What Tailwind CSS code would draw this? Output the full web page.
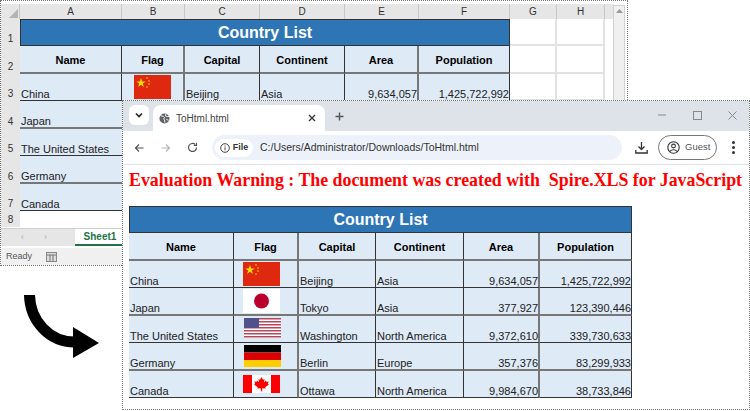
<!DOCTYPE html>
<html lang="en">
  <head>
    <meta charset="UTF-8" />
    <title>ToHtml</title>
    <script src="https://cdn.jsdelivr.net/npm/@tailwindcss/browser@4"></script>
  </head>

  <body class="relative w-[750px] h-[411px] overflow-hidden bg-white font-['Liberation_Sans',sans-serif] text-[11px] text-[#222]">
    <!-- flag symbols -->
    <svg class="hidden">
      <symbol id="flag-cn" viewBox="0 0 37 24">
        <rect width="37" height="24" fill="#de2910" />
        <path d="M7 3l1.200 3.400h3.500l-2.900 2.100 1.100 3.400-2.900-2.100-2.900 2.100 1.100-3.400-2.900-2.100h3.500z" fill="#ffde00" />
        <circle cx="13" cy="3" r=".8" fill="#ffde00" />
        <circle cx="15" cy="6" r=".8" fill="#ffde00" />
        <circle cx="15" cy="9" r=".8" fill="#ffde00" />
        <circle cx="13" cy="12" r=".8" fill="#ffde00" />
      </symbol>
      <symbol id="flag-jp" viewBox="0 0 37 24">
        <rect width="37" height="24" fill="#fff" />
        <circle cx="18.500" cy="12" r="7.500" fill="#bc002d" />
      </symbol>
      <symbol id="flag-us" viewBox="0 0 37 20">
        <rect width="37" height="20" fill="#fff" />
        <path d="M0 .8h37M0 3.800h37M0 6.800h37M0 9.800h37M0 12.800h37M0 15.800h37M0 18.800h37" stroke="#b5475c" stroke-width="1.500" />
        <rect width="15" height="10" fill="#50508a" />
      </symbol>
      <symbol id="flag-de" viewBox="0 0 37 22">
        <rect width="37" height="7.500" fill="#000" />
        <rect y="7.500" width="37" height="7.500" fill="#dd0000" />
        <rect y="15" width="37" height="7" fill="#ffce00" />
      </symbol>
      <symbol id="flag-ca" viewBox="0 0 37 18">
        <rect width="37" height="18" fill="#fff" />
        <rect width="9" height="18" fill="#f00" />
        <rect x="28" width="9" height="18" fill="#f00" />
        <path d="M18.500 2l1.500 2.800 1.500-.7-.6 3.400 2-2 .5 1.300 2.200-.3-.7 2.300 1 .6-3.600 2.900.4 1.300-3.500-.4v3h-1.400v-3l-3.500.4.4-1.300-3.600-2.900 1-.6-.7-2.300 2.200.3.500-1.300 2 2-.6-3.400 1.500.7z" fill="#f00" />
      </symbol>
    </svg>

    <!-- Excel window -->
    <div class="absolute left-0 top-0 w-[628px] h-[266px] border border-dotted border-[#777] bg-white overflow-hidden">
      <div class="relative flex flex-col h-full">
        <!-- column letters -->
        <div class="flex h-[15px] mt-[3px] mr-[13px] bg-[#e6e6e6] text-[10px] text-[#333]">
          <div class="w-[19px] flex items-end justify-end border-r border-[#c8c8c8]">
            <svg width="9" height="9" class="mr-[1px] mb-[1px]"><path d="M9 0v9h-9z" fill="#b4b4b4" /></svg>
          </div>
          <div class="w-[102px] flex items-center justify-center border-r border-[#c8c8c8]">A</div>
          <div class="w-[63px] flex items-center justify-center border-r border-[#c8c8c8]">B</div>
          <div class="w-[75px] flex items-center justify-center border-r border-[#c8c8c8]">C</div>
          <div class="w-[85px] flex items-center justify-center border-r border-[#c8c8c8]">D</div>
          <div class="w-[74px] flex items-center justify-center border-r border-[#c8c8c8]">E</div>
          <div class="w-[91px] flex items-center justify-center border-r border-[#c8c8c8]">F</div>
          <div class="w-[47px] flex items-center justify-center border-r border-[#c8c8c8]">G</div>
          <div class="w-[48px] flex items-center justify-center border-r border-[#c8c8c8]">H</div>
        </div>

        <div class="flex h-[208px]">
          <!-- row numbers -->
          <div class="w-[19px] grid grid-rows-[27px_28px_27px_28px_27px_28px_27px_16px] bg-[#e6e6e6] text-[10px] text-[#333]">
            <div class="flex items-end justify-center">1</div>
            <div class="flex items-end justify-center">2</div>
            <div class="flex items-end justify-center">3</div>
            <div class="flex items-end justify-center">4</div>
            <div class="flex items-end justify-center">5</div>
            <div class="flex items-end justify-center">6</div>
            <div class="flex items-end justify-center">7</div>
            <div class="flex items-end justify-center">8</div>
          </div>

          <!-- sheet cells -->
          <div class="relative w-[593px]">
            <div data-table="excel" class="grid grid-cols-[102px_63px_75px_85px_74px_91px] grid-rows-[27px_28px_27px_28px_27px_28px_27px] w-[490px] [&_svg]:translate-x-[2px]"></div>
            <!-- empty G and H columns -->
            <div class="absolute left-[490px] top-0 w-[96px] h-[192px] grid grid-cols-[47px_48px] grid-rows-[27px_28px_27px_28px_27px_28px_27px]">
              <div class="border-r-2 border-b-2 border-[#e2e2e2]"></div>
              <div class="border-r-2 border-b-2 border-[#e2e2e2]"></div>
              <div class="border-r-2 border-b-2 border-[#e2e2e2]"></div>
              <div class="border-r-2 border-b-2 border-[#e2e2e2]"></div>
              <div class="border-r-2 border-b-2 border-[#e2e2e2]"></div>
              <div class="border-r-2 border-b-2 border-[#e2e2e2]"></div>
            </div>
          </div>

          <!-- vertical scrollbar -->
          <div class="-mt-[14px] w-[12px] bg-[#f0f0f0] border border-[#d0d0d0] flex justify-center pt-[3px]">
            <svg width="7" height="4"><path d="M3.500 0l3.500 4h-7z" fill="#999" /></svg>
          </div>
        </div>

        <!-- sheet tabs -->
        <div class="flex h-[19px] bg-[#e6e6e6] border-t border-[#cfcfcf] mt-[1px]">
          <div class="w-[74px] flex items-center gap-[20px] pl-[20px] text-[#aaa] text-[9px]"><span>‹</span><span>›</span></div>
          <div class="w-[50px] bg-white border-b-2 border-[#217346] flex items-center justify-center font-bold text-[#217346] text-[10px]">Sheet1</div>
        </div>

        <!-- status bar -->
        <div class="flex items-center gap-[14px] h-[18px] mt-[2px] pl-[5px] bg-[#f0f0f0] text-[9px] text-[#555]">
          <span>Ready</span>
          <svg width="11" height="10" viewBox="0 0 11 10">
            <rect x=".500" y=".500" width="10" height="9" fill="#ddd" stroke="#888" />
            <path d="M1 3h9M4 3v6M7 3v6" stroke="#777" />
          </svg>
        </div>
      </div>
    </div>

    <!-- curved arrow -->
    <svg class="absolute left-[20px] top-[290px]" width="85" height="72" viewBox="0 0 85 72">
      <path d="M9.500 5c.5 26 20 47 45 47" fill="none" stroke="#000" stroke-width="11" />
      <path d="M53 37l26 16-26 15z" fill="#000" />
    </svg>

    <!-- Browser window -->
    <div class="absolute left-[122px] top-[100px] w-[628px] h-[310px] border border-dotted border-[#777] bg-white overflow-hidden flex flex-col">
      <!-- tab strip -->
      <div class="flex h-[30px] bg-[#dee3ea] shrink-0">
        <div class="ml-[6px] mt-[4px] w-[20px] h-[20px] bg-white rounded-md flex items-center justify-center">
          <svg width="10" height="10" viewBox="0 0 10 10"><path d="M2 3.500l3 3 3-3" fill="none" stroke="#222" stroke-width="1.600" /></svg>
        </div>
        <div class="ml-[4px] mt-[4px] w-[172px] h-[26px] bg-white rounded-t-lg flex items-center pl-[6px] pr-[8px]">
          <svg width="11" height="11" viewBox="0 0 12 12">
            <circle cx="6" cy="6" r="5.500" fill="#5f6368" />
            <path d="M2 3l2.500.5 1.500 1.500-1 1.500 1 1 .5 3M7.500 1l-.5 2 2 1 2-.5M8 7l2.500 1" fill="none" stroke="#fff" stroke-width="1" />
          </svg>
          <span class="ml-[6px] text-[#444] text-[10px]">ToHtml.html</span>
          <svg class="ml-auto mr-[1px]" width="8" height="8" viewBox="0 0 8 8"><path d="M1 1l6 6M7 1l-6 6" stroke="#333" stroke-width="1.300" /></svg>
        </div>
        <svg class="ml-[10px] mt-[11px]" width="9" height="9" viewBox="0 0 9 9"><path d="M4.500 .5v8M.5 4.500h8" stroke="#555" stroke-width="1.400" /></svg>
        <div class="ml-auto flex items-center gap-[26px] mr-[12px] mb-[2px]">
          <svg width="10" height="10" viewBox="0 0 10 10"><path d="M1 5h8" stroke="#888" /></svg>
          <svg width="9" height="9" viewBox="0 0 9 9"><rect x=".500" y=".500" width="8" height="8" fill="none" stroke="#888" /></svg>
          <svg width="9" height="9" viewBox="0 0 9 9"><path d="M.5 .5l8 8M8.500 .5l-8 8" stroke="#888" /></svg>
        </div>
      </div>

      <!-- toolbar -->
      <div class="flex items-center h-[34px] shrink-0 border-b border-[#e3e3e3] text-[#333]">
        <svg class="ml-[11px]" width="10" height="10" viewBox="0 0 10 10"><path d="M9.500 5h-8M5 1.500l-3.500 3.500 3.500 3.500" fill="none" stroke="#555" stroke-width="1.200" /></svg>
        <svg class="ml-[17px]" width="10" height="10" viewBox="0 0 10 10"><path d="M.5 5h8M5 1.500l3.500 3.500-3.500 3.500" fill="none" stroke="#b5b5b5" stroke-width="1.200" /></svg>
        <svg class="ml-[16px]" width="11" height="11" viewBox="0 0 11 11"><path d="M9.500 5.500a4 4 0 1 1-1.200-2.900M9.500 .8v2.700h-2.700" fill="none" stroke="#555" stroke-width="1.200" /></svg>
        <div class="ml-[14px] w-[410px] h-[25px] bg-[#edf2fa] rounded-full flex items-center pl-[3px]">
          <div class="w-[38px] h-[18px] bg-white rounded-full flex items-center justify-center gap-[3px] font-bold text-[9px] text-[#333]">
            <svg width="10" height="10" viewBox="0 0 10 10"><circle cx="5" cy="5" r="4.300" fill="none" stroke="#444" /><path d="M5 4.300v3M5 2.500v1" stroke="#444" /></svg>
            <span>File</span>
          </div>
          <span class="ml-[7px] text-[10.500px] text-[#333]">C:/Users/Administrator/Downloads/ToHtml.html</span>
        </div>
        <svg class="ml-[13px]" width="13" height="13" viewBox="0 0 13 13"><path d="M6.500 1v7M3.500 5.500l3 3 3-3M.8 9v3h11.400v-3" fill="none" stroke="#333" stroke-width="1.300" /></svg>
        <div class="ml-[10px] w-[59px] h-[25px] border border-[#777] rounded-full flex items-center pl-[8px] gap-[5px] text-[9.500px] text-[#555]">
          <svg width="13" height="13" viewBox="0 0 13 13"><circle cx="6.500" cy="6.500" r="5.700" fill="none" stroke="#333" stroke-width="1.100" /><circle cx="6.500" cy="5" r="1.900" fill="none" stroke="#333" stroke-width="1.100" /><path d="M3 10.300c1.800-2 5.200-2 7 0" fill="none" stroke="#333" stroke-width="1.100" /></svg>
          <span>Guest</span>
        </div>
        <div class="ml-[15px] flex flex-col gap-[2px]">
          <span class="w-[3px] h-[3px] rounded-full bg-[#333]"></span>
          <span class="w-[3px] h-[3px] rounded-full bg-[#333]"></span>
          <span class="w-[3px] h-[3px] rounded-full bg-[#333]"></span>
        </div>
      </div>

      <!-- page content -->
      <p class="ml-[6px] mt-[4px] h-[37px] whitespace-pre font-['Liberation_Serif',serif] font-bold text-[17.85px] leading-[22px] text-[#f00]">Evaluation Warning : The document was created with  Spire.XLS for JavaScript</p>
      <div data-table="page" class="ml-[6px] grid grid-cols-[105px_65px_77px_88px_76px_92px] grid-rows-[27px_28px_27px_28px_27px_28px_27px] w-[503px] [&_svg]:-translate-x-[1px]"></div>
    </div>

    <script>
      const countries = [
        ["China", "cn", "Beijing", "Asia", "9,634,057", "1,425,722,992", "ml-[10px] mt-[1px] w-[37px] h-[24px]"],
        ["Japan", "jp", "Tokyo", "Asia", "377,927", "123,390,446", "ml-[10px] mt-[1px] w-[37px] h-[24px]"],
        ["The United States", "us", "Washington", "North America", "9,372,610", "339,730,633", "ml-[11px] mt-[2px] w-[37px] h-[20px]"],
        ["Germany", "de", "Berlin", "Europe", "357,376", "83,299,933", "ml-[11px] mt-[2px] w-[37px] h-[22px]"],
        ["Canada", "ca", "Ottawa", "North America", "9,984,670", "38,733,846", "ml-[10px] mt-[4px] w-[37px] h-[18px]"],
      ];
      const heads = ["Name", "Flag", "Capital", "Continent", "Area", "Population"];
      const rightLines = ["border-r border-[#333]", "border-r-2 border-[#777]", "border-r border-[#333]", "border-r border-[#333]", "border-r-2 border-[#777]", "border-r border-[#333]"];

      document.querySelectorAll("[data-table]").forEach((table) => {
        let html = `<div class="col-span-6 flex items-center justify-center bg-[#2e75b6] border border-[#333] font-bold text-white text-[16px]">Country List</div>`;
        heads.forEach((h, i) => {
          html += `<div class="flex items-center justify-center pt-[2px] bg-[#deeaf6] border-b-2 border-b-[#777] ${rightLines[i]} font-bold text-black">${h}</div>`;
        });
        countries.forEach((c, r) => {
          const bottom = r % 2 ? "border-b-2 border-b-[#777]" : "border-b border-b-[#333]";
          const cell = `bg-[#deeaf6] ${bottom}`;
          // the browser window covers these excel cells, only column A shows
          const covered = table.dataset.table === "excel" && r > 0;
          if (covered) {
            html += `<div class="${cell} col-span-6 flex items-end pl-[1px] leading-[12px]">${c[0]}</div>`;
            return;
          }
          html += `<div class="${cell} ${rightLines[0]} flex items-end pl-[1px] leading-[12px]">${c[0]}</div>`;
          html += `<div class="${cell} ${rightLines[1]}"><svg class="${c[6]}"><use href="#flag-${c[1]}" /></svg></div>`;
          html += `<div class="${cell} ${rightLines[2]} flex items-end pl-[1px] leading-[12px]">${c[2]}</div>`;
          html += `<div class="${cell} ${rightLines[3]} flex items-end pl-[1px] leading-[12px]">${c[3]}</div>`;
          html += `<div class="${cell} ${rightLines[4]} flex items-end justify-end leading-[12px]">${c[4]}</div>`;
          html += `<div class="${cell} ${rightLines[5]} flex items-end justify-end leading-[12px]">${c[5]}</div>`;
        });
        table.innerHTML = html;
      });
    </script>
  </body>
</html>
